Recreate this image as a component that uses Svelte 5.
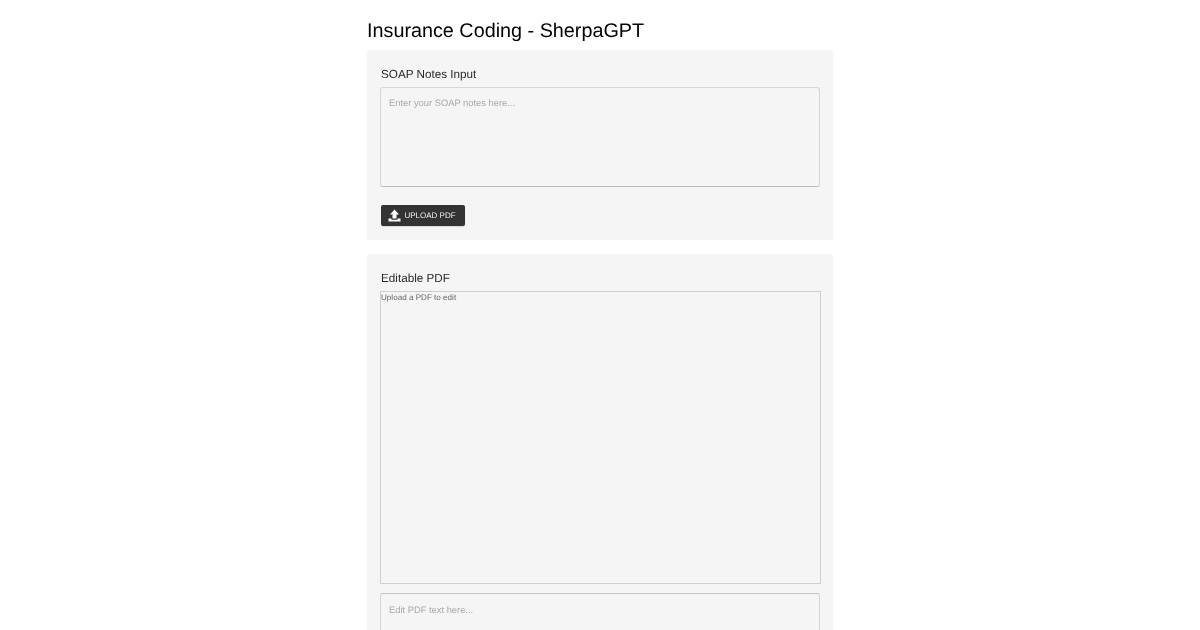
<script>
  const title = 'Insurance Coding - SherpaGPT';
</script>

<main class="page">
  <h1>{title}</h1>

  <section class="panel first">
    <h2>SOAP Notes Input</h2>
    <div class="field soap">
      <textarea placeholder="Enter your SOAP notes here..."></textarea>
    </div>
    <button type="button" class="upload">
      <svg viewBox="0 0 13 13" width="13" height="13" aria-hidden="true">
        <path d="M6.5 0.5 11 5.5H8.5V9.5H4.5V5.5H2ZM0.5 9.5H3.5V10.7H9.5V9.5H12.5V12.5H0.5Z" fill="#fff" />
      </svg>
      <span>UPLOAD PDF</span>
    </button>
  </section>

  <section class="panel second">
    <h2>Editable PDF</h2>
    <div class="viewer">Upload a PDF to edit</div>
    <div class="field edit">
      <textarea placeholder="Edit PDF text here..."></textarea>
    </div>
  </section>
</main>

<style>
  :global(html), :global(body) {
    margin: 0;
    background: #fff;
    overflow: hidden;
    height: 630px;
  }

  .page {
    box-sizing: border-box;
    width: 466px;
    margin: 0 auto;
    padding-top: 17.5px;
    font-family: "Liberation Sans", Arial, sans-serif;
    color: #222;
    text-rendering: geometricPrecision;
    filter: blur(0.25px);
  }

  h1 {
    margin: 0 0 6.5px;
    font-size: 19.8px;
    line-height: 26px;
    font-weight: 400;
    color: #000;
  }

  .panel {
    box-sizing: border-box;
    background: #f5f5f5;
    border-radius: 2px;
    padding: 15.5px 13px 14px 14px;
  }

  .first {
    height: 190px;
    margin-bottom: 14px;
  }

  .second {
    height: 500px;
  }

  h2 {
    margin: 0 0 3.5px;
    font-size: 11.7px;
    line-height: 18px;
    font-weight: 400;
    color: #2a2a2a;
  }

  .field {
    box-sizing: border-box;
    width: 440px;
    margin-left: -1px;
    border: 1px solid #d6d6d6;
    border-bottom-color: #bdbdbd;
    border-radius: 3px;
  }

  .soap {
    height: 100px;
    margin-bottom: 18px;
  }

  .edit {
    height: 100px;
    margin-top: 9px;
    border-top-color: #c4c4c4;
  }

  textarea {
    display: block;
    box-sizing: border-box;
    width: 100%;
    height: 100%;
    padding: 8.5px 8px;
    border: 0;
    outline: 0;
    resize: none;
    background: transparent;
    font-family: inherit;
    font-size: 9.35px;
    line-height: 13px;
    color: #333;
    text-rendering: geometricPrecision;
  }

  .edit textarea {
    padding-top: 9.5px;
  }

  textarea::placeholder {
    color: #a9a9a9;
    opacity: 1;
  }

  .upload {
    display: flex;
    align-items: center;
    gap: 4px;
    box-sizing: border-box;
    width: 84px;
    height: 21px;
    padding: 0 0 0 6.5px;
    border: 0;
    border-radius: 2px;
    background: #333;
    color: #f2f2f2;
    font-family: inherit;
    font-size: 8px;
    text-rendering: geometricPrecision;
    box-shadow: 0 1px 1px rgba(0, 0, 0, 0.12);
  }

  .viewer {
    box-sizing: border-box;
    width: 441px;
    height: 293px;
    margin-left: -1px;
    border: 1px solid #d0d0d0;
    font-size: 8.1px;
    line-height: 11px;
    color: #666;
  }
</style>
